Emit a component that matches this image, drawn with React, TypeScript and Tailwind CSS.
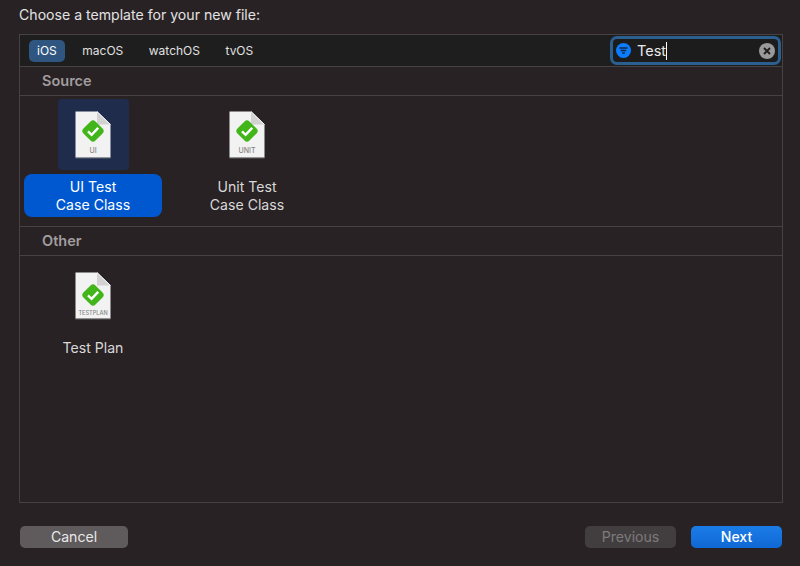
import React from "react";

/* ── FileIcon ── */

function FileIcon({ label, lowBadge }: { label: string; lowBadge?: boolean }) {
  const badgeY = lowBadge ? 23 : 20;
  return (
    <svg width="36" height="48" viewBox="0 0 36 48" className="block">
      <path d="M0.5 0.5H22L35.5 13.5V46.5H0.5Z" fill="#f2f2f2" />
      <path d="M0.5 46.5H35.5V47.3H0.5Z" fill="#9a9a9a" />
      <path d="M22 0.5V13.5H35.5Z" fill="#d2d2d2" />
      <path d="M22 0.5L35.5 13.5" stroke="#ffffff" strokeWidth="1" />
      <rect
        x="9.5"
        y={badgeY - 8.5}
        width="17"
        height="17"
        rx="3.5"
        transform={`rotate(45 18 ${badgeY})`}
        fill="#41b51a"
      />
      <path
        d={`M13 ${badgeY + 0.3}l3.6 3.6 6.6-7`}
        fill="none"
        stroke="#ffffff"
        strokeWidth="2.4"
      />
      <text
        x="18"
        y={lowBadge ? 42.5 : 42}
        textAnchor="middle"
        fill="#858585"
        fontFamily="Inter, sans-serif"
        fontSize={lowBadge ? 5.6 : 7}
        fontWeight={500}
      >
        {label}
      </text>
    </svg>
  );
}

/* ── TemplateCell ── */

interface TemplateCellProps {
  icon: string;
  name: string[];
  selected?: boolean;
  lowBadge?: boolean;
}

function TemplateCell({ icon, name, selected, lowBadge }: TemplateCellProps) {
  return (
    <div className="flex w-[154px] flex-col items-center">
      <div
        className={`flex h-[71px] w-[71px] items-center justify-center rounded-[4px] ${selected ? "bg-[#1f2c4b]" : ""}`}
      >
        <FileIcon label={icon} lowBadge={lowBadge} />
      </div>
      <div
        className={`mt-[4px] w-[138px] rounded-[8px] pt-[4px] pb-[4px] text-center text-[14.1px] leading-[17.5px] ${selected ? "bg-[#0058d0] text-white" : "text-[#d8d8d8]"}`}
      >
        {name.map((line) => (
          <div key={line}>{line}</div>
        ))}
      </div>
    </div>
  );
}

/* ── SectionHeader ── */

function SectionHeader({ title }: { title: string }) {
  return (
    <div className="flex h-[30px] items-center border-y border-[#464244] pb-[1px] pl-[22px] text-[14.5px] font-semibold text-[#a09d9e]">
      {title}
    </div>
  );
}

const platforms = ["iOS", "macOS", "watchOS", "tvOS"];

export default function App() {
  return (
    <div
      className="flex h-[566px] w-[800px] flex-col bg-[#292225] pt-[6px] pr-[17px] pl-[19px] text-[#e2e2e2]"
      style={{ fontFamily: "Inter, 'Liberation Sans', sans-serif" }}
    >
      <div className="h-[28px] text-[14.1px] leading-[18px]">Choose a template for your new file:</div>

      <div className="flex h-[469px] flex-col border border-[#464244]">
        {/* platform tabs + filter */}
        <div className="flex h-[31px] items-center justify-between bg-[#1e1e1e] pr-[1px] pl-[9px]">
          <div className="flex items-center gap-[9.5px] text-[12px]">
            {platforms.map((p, i) => (
              <span
                key={p}
                className={`flex h-[22px] items-center rounded-[5px] px-[8px] ${i === 0 ? "bg-[#2f5680] text-white" : "text-[#e0e0e0]"}`}
              >
                {p}
              </span>
            ))}
          </div>
          <div className="flex h-[29px] w-[171px] items-center rounded-[7px] border-[3px] border-[#2a5f8f] bg-[#1c1c1c] pr-[3px] pl-[3px]">
            <svg width="15" height="15" viewBox="0 0 15 15" className="shrink-0">
              <circle cx="7.5" cy="7.5" r="7.5" fill="#0a7cff" />
              <path d="M3.4 5h8.2M4.8 7.5h5.4M6.2 10h2.6" stroke="#14263f" strokeWidth="1.4" />
            </svg>
            <span className="ml-[6px] border-r border-white text-[14.5px] leading-[18px] text-[#e8e8e8]">
              Test
            </span>
            <svg width="16" height="16" viewBox="0 0 16 16" className="ml-auto shrink-0">
              <circle cx="8" cy="8" r="8" fill="#9a9a9a" />
              <path d="M5 5l6 6M11 5l-6 6" stroke="#1c1c1c" strokeWidth="1.8" />
            </svg>
          </div>
        </div>

        <SectionHeader title="Source" />
        <div className="flex h-[130px] pt-[3px]">
          <div className="-ml-[4px] flex">
            <TemplateCell icon="UI" name={["UI Test", "Case Class"]} selected />
            <TemplateCell icon="UNIT" name={["Unit Test", "Case Class"]} />
          </div>
        </div>

        <SectionHeader title="Other" />
        <div className="flex flex-1 pt-[4px]">
          <div className="-ml-[4px]">
            <TemplateCell icon="TESTPLAN" name={["Test Plan"]} lowBadge />
          </div>
        </div>
      </div>

      <div className="mt-[23px] flex items-center justify-between px-[1px] text-[14.1px]">
        <button type="button" className="h-[22px] w-[108px] rounded-[5px] bg-[#5f5a5c] text-[#e8e8e8]">
          Cancel
        </button>
        <div className="flex gap-[15px]">
          <button type="button" className="h-[22px] w-[91px] rounded-[5px] bg-[#423e40] text-[#7d7a7b]">
            Previous
          </button>
          <button
            type="button"
            className="h-[22px] w-[91px] rounded-[5px] bg-gradient-to-b from-[#1b7ce8] to-[#0f68d4] font-medium text-white"
          >
            Next
          </button>
        </div>
      </div>
    </div>
  );
}
